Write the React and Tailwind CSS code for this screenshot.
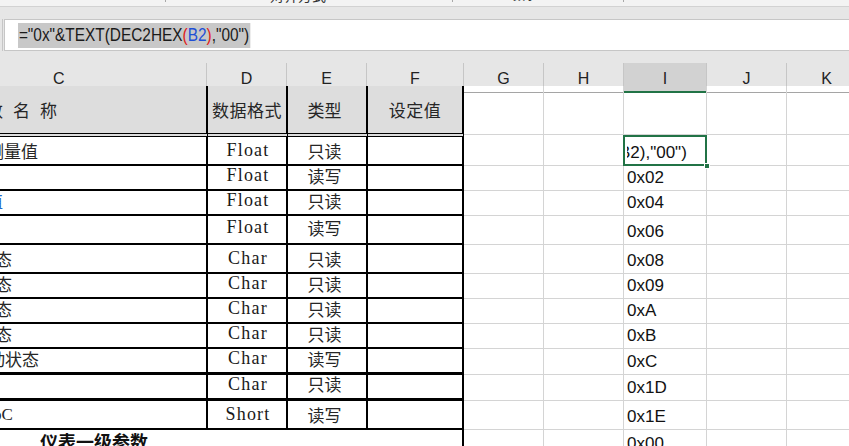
import React from "react";

const HEAD_COLS = "grid grid-cols-[207px_80px_80px_97px_80px_80px_83px_80px_80px]";
const ROW_COLS = "grid grid-cols-[208px_80px_80px_96px_80px_80px_83px_80px_80px]";
const CJK = "font-['Noto_Sans_CJK_SC',sans-serif]";
const SANS = "font-['Liberation_Sans',sans-serif]";
const SERIF = "font-['Liberation_Serif','Noto_Sans_CJK_SC',serif]";

const rows = [
  { h: "h-[25px]", bb: "border-b-2", c: <span className="ml-[-13px]">测量值</span>, d: "Float", e: "只读", i: "edit" },
  { h: "h-[25px]", bb: "border-b-2", c: null, d: "Float", e: "读写", i: "0x02" },
  { h: "h-[25px]", bb: "border-b-2", c: <span className="ml-[-14px] text-[#2468c8]">值</span>, d: "Float", e: "只读", i: "0x04" },
  { h: "h-[33px]", bb: "border-b-2", c: null, d: "Float", e: "读写", i: "0x06" },
  { h: "h-[25px]", bb: "border-b-2", c: <span className="ml-[-22px]">状态</span>, d: "Char", e: "只读", i: "0x08" },
  { h: "h-[25px]", bb: "border-b-2", c: <span className="ml-[-22px]">状态</span>, d: "Char", e: "只读", i: "0x09" },
  { h: "h-[25px]", bb: "border-b-2", c: <span className="ml-[-22px]">状态</span>, d: "Char", e: "只读", i: "0xA" },
  { h: "h-[25px]", bb: "border-b-2", c: <span className="ml-[-22px]">状态</span>, d: "Char", e: "只读", i: "0xB" },
  { h: "h-[25px]", bb: "border-b-[3px]", c: <span className="ml-[-12px]">动状态</span>, d: "Char", e: "读写", i: "0xC" },
  { h: "h-[31px]", bb: "border-b-[3px]", c: null, d: "Char", e: "只读", i: "0x1D" },
  { h: "h-[26px]", bb: "border-b-2", c: <span className={`ml-[-7px] ${SERIF}`}>oC</span>, d: "Short", e: "读写", i: "0x1E" },
];

function GridCell() {
  return <div className="border-r border-b border-[#d4d4d4]" />;
}

function ICell({ value }) {
  if (value === "edit") {
    return (
      <div className="relative border-r border-b border-[#d4d4d4] flex items-end pb-[4px]">
        <div className="ml-[3px] overflow-hidden w-[76px]">
          <span className={`block whitespace-nowrap ml-[-8px] text-[17px] leading-none text-[#111] ${SANS}`}>B2),"00")</span>
        </div>
        <div className="absolute left-[-1px] top-[-2px] right-[-1px] bottom-[-1px] border-2 border-[#217346] z-10" />
        <div className="absolute right-[-4px] bottom-[-4px] w-[6px] h-[6px] bg-[#217346] border border-white z-20" />
      </div>
    );
  }
  return (
    <div className="border-r border-b border-[#d4d4d4] flex items-end pb-[4px]">
      <span className={`pl-[3px] text-[17px] leading-none text-[#111] ${SANS}`}>{value}</span>
    </div>
  );
}

export default function App() {
  return (
    <div className="w-[849px] h-[446px] overflow-hidden bg-white text-[#262626]">
      {/* ribbon bottom strip */}
      <div className="h-[7px] bg-[#f3f3f3] border-b border-[#d2d2d2] relative overflow-hidden">
        <div className="absolute left-[165px] top-0 w-px h-[2px] bg-[#a8a8a8]" />
        <div className="absolute left-[452px] top-0 w-px h-[2px] bg-[#a8a8a8]" />
        <div className="absolute left-[623px] top-0 w-px h-[2px] bg-[#a8a8a8]" />
        <span className={`absolute left-[270px] top-[-12px] text-[14px] leading-none text-[#333] ${CJK}`}>对齐方式</span>
        <span className={`absolute left-[513px] top-[-11px] text-[12px] leading-none text-[#333] ${CJK}`}>数字</span>
      </div>
      <div className="h-[12px] bg-[#e6e6e6]" />
      {/* formula bar */}
      <div className="h-[32px] bg-[#e6e6e6] flex">
        <div className="w-[3px] border-r border-[#c6c6c6]" />
        <div className="flex-1 ml-px bg-white border-y border-l border-[#c6c6c6] flex items-center">
          <span className={`ml-[13px] h-[25px] px-px bg-[#c8c8c8] flex items-center whitespace-nowrap text-[17.5px] text-[#1a1a1a] scale-x-[0.88] origin-left ${SANS}`}>
            ="0x"&amp;TEXT(DEC2HEX<span className="text-[#e0201b]">(</span><span className="text-[#1f4fd6]">B2</span><span className="text-[#e0201b]">)</span>,"00")
          </span>
        </div>
      </div>
      <div className="h-[12px] bg-[#e6e6e6]" />
      {/* column headers */}
      <div className={`${HEAD_COLS} h-[23px] bg-[#e6e6e6] text-[16px] text-[#222] ${SANS}`}>
        <div className="border-r border-b border-r-[#c6c6c6] border-b-[#a5a5a5] flex items-center pl-[53px] pt-[3px]">C</div>
        {["D", "E", "F", "G", "H"].map((l) => (
          <div key={l} className="border-r border-b border-r-[#c6c6c6] border-b-[#a5a5a5] flex items-center justify-center pt-[3px]">{l}</div>
        ))}
        <div className="bg-[#d2d2d2] border-r border-r-[#c6c6c6] border-b-2 border-b-[#217346] flex items-center justify-center pt-[4px]">I</div>
        {["J", "K"].map((l) => (
          <div key={l} className="border-r border-b border-r-[#c6c6c6] border-b-[#a5a5a5] flex items-center justify-center pt-[3px]">{l}</div>
        ))}
      </div>
      {/* table header row */}
      <div className={`${ROW_COLS} h-[51px] text-[17px] ${CJK}`}>
        <div className="bg-[#dddddd] border-r-2 border-b-4 border-double border-black flex items-center overflow-hidden">
          <div className="flex gap-[10px] ml-[-41px] whitespace-nowrap">
            <span>参</span><span>数</span><span>名</span><span>称</span>
          </div>
        </div>
        <div className="bg-[#dddddd] border-r-2 border-b-4 border-double border-black flex items-center justify-center tracking-[0.5px]">数据格式</div>
        <div className="bg-[#dddddd] border-r-2 border-b-4 border-double border-black flex items-center justify-center pr-[5px]">类型</div>
        <div className="bg-[#dddddd] border-r-2 border-b-4 border-double border-black flex items-center justify-center tracking-[0.5px]">设定值</div>
        <div className="border-r border-[#d4d4d4] relative"><div className="absolute left-0 right-[-1px] bottom-[2px] h-px bg-[#d4d4d4]" /></div>
        <div className="border-r border-[#d4d4d4] relative"><div className="absolute left-0 right-[-1px] bottom-[2px] h-px bg-[#d4d4d4]" /></div>
        <div className="border-r border-[#d4d4d4] relative"><div className="absolute left-0 right-[-1px] bottom-[2px] h-px bg-[#d4d4d4]" /></div>
        <div className="border-r border-[#d4d4d4] relative"><div className="absolute left-0 right-[-1px] bottom-[2px] h-px bg-[#d4d4d4]" /></div>
        <div className="border-r border-[#d4d4d4] relative"><div className="absolute left-0 right-[-1px] bottom-[2px] h-px bg-[#d4d4d4]" /></div>
      </div>
      {/* data rows */}
      {rows.map((r, idx) => (
        <div key={idx} className={`${ROW_COLS} ${r.h}`}>
          <div className={`border-r-2 ${r.bb} border-black flex items-center overflow-hidden whitespace-nowrap text-[17px] ${CJK}`}>{r.c}</div>
          <div className={`border-r-2 ${r.bb} border-black flex items-center justify-center text-[18px] tracking-[1.2px] pl-[2px] text-[#1a1a1a] ${SERIF}`}>{r.d}</div>
          <div className={`border-r-2 ${r.bb} border-black flex items-center justify-center pr-[5px] text-[17px] ${CJK}`}>{r.e}</div>
          <div className={`border-r-2 ${r.bb} border-black`} />
          <GridCell />
          <GridCell />
          <ICell value={r.i} />
          <GridCell />
          <GridCell />
        </div>
      ))}
      {/* last row */}
      <div className={`${ROW_COLS} h-[30px]`}>
        <div className={`col-span-4 border-r-2 border-black pl-[40px] pt-[5px] text-[18px] font-bold leading-none text-[#111] ${CJK}`}>仪表一级参数</div>
        <GridCell />
        <GridCell />
        <ICell value="0x00" />
        <GridCell />
        <GridCell />
      </div>
    </div>
  );
}
